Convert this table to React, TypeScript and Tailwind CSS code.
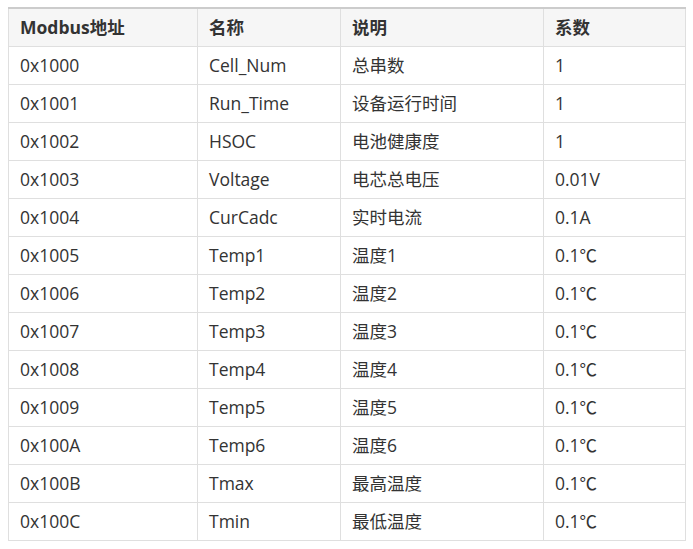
const rows: [string, string, string, string][] = [
  ["0x1000", "Cell_Num", "总串数", "1"],
  ["0x1001", "Run_Time", "设备运行时间", "1"],
  ["0x1002", "HSOC", "电池健康度", "1"],
  ["0x1003", "Voltage", "电芯总电压", "0.01V"],
  ["0x1004", "CurCadc", "实时电流", "0.1A"],
  ["0x1005", "Temp1", "温度1", "0.1℃"],
  ["0x1006", "Temp2", "温度2", "0.1℃"],
  ["0x1007", "Temp3", "温度3", "0.1℃"],
  ["0x1008", "Temp4", "温度4", "0.1℃"],
  ["0x1009", "Temp5", "温度5", "0.1℃"],
  ["0x100A", "Temp6", "温度6", "0.1℃"],
  ["0x100B", "Tmax", "最高温度", "0.1℃"],
  ["0x100C", "Tmin", "最低温度", "0.1℃"],
];

const headers = ["Modbus地址", "名称", "说明", "系数"];
const widths = ["w-[189px]", "w-[143px]", "w-[203px]", "w-[142px]"];

export default function App() {
  return (
    <div className="bg-white w-[693px] h-[549px] pt-[7px] pl-[8px] font-['Open_Sans','Noto_Sans_CJK_SC',sans-serif] text-[17.5px] text-[#333]">
      <table className="border-collapse border-t-2 border-t-[#ccc] w-[677px] table-fixed">
        <thead>
          <tr className="bg-[#f6f6f6]">
            {headers.map((h, i) => (
              <th
                key={h}
                className={`${widths[i]} h-[38px] p-0 border border-[#dfdfdf] border-t-0 px-[11px] text-left font-bold`}
              >
                {h}
              </th>
            ))}
          </tr>
        </thead>
        <tbody>
          {rows.map((r) => (
            <tr key={r[0]}>
              {r.map((c, i) => (
                <td key={i} className="h-[38px] p-0 border border-[#dfdfdf] px-[11px]">
                  {c}
                </td>
              ))}
            </tr>
          ))}
        </tbody>
      </table>
    </div>
  );
}
